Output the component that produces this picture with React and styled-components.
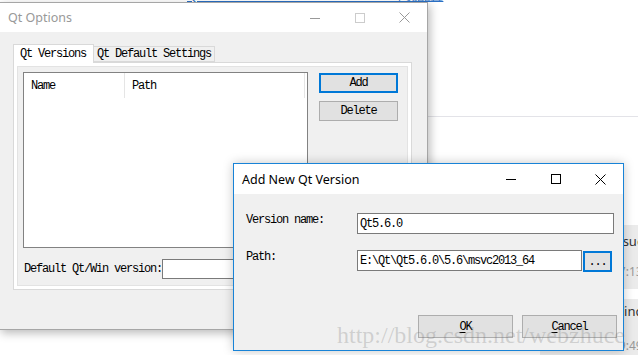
import styled, { createGlobalStyle } from 'styled-components';

const mono = `"Liberation Mono", "DejaVu Sans Mono", monospace`;
const ui = `"Noto Sans", "Open Sans", sans-serif`;

const GlobalStyle = createGlobalStyle`
    html, body {
        margin: 0;
        padding: 0;
        background: #ffffff;
    }
    body {
        font-family: ${mono};
    }
    * {
        box-sizing: border-box;
    }
`;

function MinIcon({ color }) {
    return (
        <svg width="10" height="10" viewBox="0 0 10 10">
            <line x1="0" y1="5.5" x2="10" y2="5.5" stroke={color} strokeWidth="1" />
        </svg>
    );
}

function MaxIcon({ color }) {
    return (
        <svg width="10" height="10" viewBox="0 0 10 10">
            <rect x="0.5" y="0.5" width="9" height="9" fill="none" stroke={color} strokeWidth="1" />
        </svg>
    );
}

function CloseIcon({ color }) {
    return (
        <svg width="11" height="11" viewBox="0 0 11 11">
            <path d="M0.5 0.5 L10.5 10.5 M10.5 0.5 L0.5 10.5" stroke={color} strokeWidth="1" fill="none" />
        </svg>
    );
}

function WindowControls({ active }) {
    const main = active ? '#000000' : '#999999';
    const dim = active ? '#000000' : '#cccccc';
    return (
        <Controls>
            <ControlButton>
                <MinIcon color={main} />
            </ControlButton>
            <ControlButton>
                <MaxIcon color={dim} />
            </ControlButton>
            <ControlButton>
                <CloseIcon color={main} />
            </ControlButton>
        </Controls>
    );
}

function App() {
    return (
        <>
            <GlobalStyle />
            <Desktop>
                <BackPage>
                    <PageLink>Qt 5.6.0 Visual Studio 2013 64-bit 环境配置</PageLink>
                    <Aside>
                        <Divider />
                        <CardList>
                            <Card $height={64} $top={8}>
                                <CardTitle>Issue</CardTitle>
                                <CardTime $gap={15}>07:13</CardTime>
                            </Card>
                            <Card $height={60} $top={4}>
                                <CardTitle>Windows</CardTitle>
                                <CardTime $gap={19}>09:49</CardTime>
                            </Card>
                        </CardList>
                    </Aside>
                </BackPage>

                <OptionsWindow>
                    <TitleBar>
                        <Title $active={false}>Qt Options</Title>
                        <WindowControls active={false} />
                    </TitleBar>
                    <OptionsBody>
                        <TabBar>
                            <Tab $active>Qt Versions</Tab>
                            <Tab>Qt Default Settings</Tab>
                        </TabBar>
                        <TabPane>
                            <TabInner>
                                <TopRow>
                                    <ListView>
                                        <ListHeader>
                                            <HeaderCell $width={101}>Name</HeaderCell>
                                            <HeaderCell $width={180}>Path</HeaderCell>
                                        </ListHeader>
                                    </ListView>
                                    <ButtonColumn>
                                        <SideButton $focused>Add</SideButton>
                                        <SideButton>Delete</SideButton>
                                    </ButtonColumn>
                                </TopRow>
                                <DefaultRow>
                                    <span>Default Qt/Win version:</span>
                                    <SelectBox />
                                </DefaultRow>
                            </TabInner>
                        </TabPane>
                    </OptionsBody>
                </OptionsWindow>

                <Dialog>
                    <TitleBar $dialog>
                        <Title $active>Add New Qt Version</Title>
                        <WindowControls active />
                    </TitleBar>
                    <DialogBody>
                        <Form>
                            <Label>Version name:</Label>
                            <TextField>Qt5.6.0</TextField>
                            <Label>Path:</Label>
                            <PathRow>
                                <TextField>E:\Qt\Qt5.6.0\5.6\msvc2013_64</TextField>
                                <BrowseButton>...</BrowseButton>
                            </PathRow>
                        </Form>
                        <DialogButtons>
                            <DialogButton>
                                <u>O</u>K
                            </DialogButton>
                            <DialogButton>
                                <u>C</u>ancel
                            </DialogButton>
                        </DialogButtons>
                    </DialogBody>
                </Dialog>

                <Watermark>http://blog.csdn.net/webzhuce</Watermark>
            </Desktop>
        </>
    );
}

const Desktop = styled.div`
    position: relative;
    width: 638px;
    height: 355px;
    overflow: hidden;
    background: #ffffff;
`;

const BackPage = styled.div`
    display: flex;
    flex-direction: column;
    height: 100%;
`;

const PageLink = styled.div`
    margin-top: -12px;
    margin-left: 187px;
    height: 14px;
    font-family: ${ui};
    font-size: 13px;
    line-height: 14px;
    color: #2a6fc4;
    text-decoration: underline;
    white-space: nowrap;
`;

const Aside = styled.div`
    display: flex;
    flex-direction: column;
    margin-left: 427px;
`;

const Divider = styled.div`
    margin-top: 114px;
    height: 1px;
    background: #e3e3e8;
`;

const CardList = styled.div`
    display: flex;
    flex-direction: column;
    gap: 10px;
    margin-top: 108px;
    margin-left: 113px;
`;

const Card = styled.div`
    height: ${(p) => p.$height}px;
    padding: ${(p) => p.$top}px 0 0 72px;
    background: #ebebeb;
    font-family: ${ui};
    white-space: nowrap;
`;

const CardTitle = styled.div`
    font-size: 13px;
    line-height: 16px;
    color: #333333;
`;

const CardTime = styled.div`
    margin-top: ${(p) => p.$gap}px;
    font-size: 12px;
    line-height: 16px;
    color: #999999;
`;

const OptionsWindow = styled.div`
    position: absolute;
    left: -1px;
    top: 2px;
    width: 429px;
    height: 328px;
    display: flex;
    flex-direction: column;
    border: 1px solid #a6a6a6;
    background: #f0f0f0;
    box-shadow: 2px 3px 9px rgba(0, 0, 0, 0.28);
`;

const TitleBar = styled.div`
    display: flex;
    align-items: center;
    height: ${(p) => (p.$dialog ? 30 : 29)}px;
    flex-shrink: 0;
    background: #ffffff;
`;

const Title = styled.div`
    padding-left: 8px;
    font-family: ${ui};
    font-size: 12.5px;
    color: ${(p) => (p.$active ? '#000000' : '#999999')};
    white-space: nowrap;
`;

const Controls = styled.div`
    display: flex;
    margin-left: auto;
    height: 100%;
`;

const ControlButton = styled.div`
    display: flex;
    align-items: center;
    justify-content: center;
    width: 45px;
    height: 100%;

    svg {
        display: block;
    }
`;

const OptionsBody = styled.div`
    flex: 1;
    display: flex;
    flex-direction: column;
    padding: 12px 15px 40px 13px;
    font-family: ${mono};
    font-size: 12px;
    letter-spacing: -1.2px;
    color: #000000;
`;

const TabBar = styled.div`
    display: flex;
    align-items: flex-end;
    height: 18px;
    position: relative;
    z-index: 1;
`;

const Tab = styled.div`
    display: flex;
    align-items: center;
    height: ${(p) => (p.$active ? 19 : 16)}px;
    padding: ${(p) => (p.$active ? '0 7px 1px 6px' : '0 3px')};
    margin-bottom: ${(p) => (p.$active ? -1 : 0)}px;
    border: 1px solid #d9d9d9;
    border-bottom: ${(p) => (p.$active ? 'none' : '1px solid #d9d9d9')};
    border-left: ${(p) => (p.$active ? '1px solid #d9d9d9' : 'none')};
    background: ${(p) => (p.$active ? '#ffffff' : '#f0f0f0')};
    white-space: nowrap;
`;

const TabPane = styled.div`
    flex: 1;
    display: flex;
    padding: 3px;
    border: 1px solid #d9d9d9;
    background: #ffffff;
`;

const TabInner = styled.div`
    flex: 1;
    display: flex;
    flex-direction: column;
    padding: 5px 5px 6px 5px;
    border: 1px solid #e3e3e3;
    background: #f0f0f0;
`;

const TopRow = styled.div`
    display: flex;
    gap: 11px;
`;

const ListView = styled.div`
    width: 285px;
    height: 176px;
    border: 1px solid #828282;
    background: #ffffff;
`;

const ListHeader = styled.div`
    display: flex;
    height: 25px;
`;

const HeaderCell = styled.div`
    display: flex;
    align-items: center;
    width: ${(p) => p.$width}px;
    padding-left: 7px;
    border-right: 1px solid #e5e5e5;
`;

const ButtonColumn = styled.div`
    display: flex;
    flex-direction: column;
    gap: 8px;
    margin-top: 1px;
`;

const SideButton = styled.div`
    display: flex;
    align-items: center;
    justify-content: center;
    width: 79px;
    height: 20px;
    border: ${(p) => (p.$focused ? '2px solid #0078d7' : '1px solid #adadad')};
    background: #e1e1e1;
`;

const DefaultRow = styled.div`
    display: flex;
    align-items: center;
    gap: 0;
    margin-top: 11px;
    padding-left: 1px;
`;

const SelectBox = styled.div`
    width: 144px;
    height: 20px;
    border: 1px solid #7a7a7a;
    background: #ffffff;
`;

const Dialog = styled.div`
    position: absolute;
    left: 233px;
    top: 163px;
    width: 391px;
    height: 188px;
    display: flex;
    flex-direction: column;
    border: 1px solid #1883d7;
    background: #f0f0f0;
    box-shadow: 0 0 10px rgba(0, 0, 0, 0.22);
`;

const DialogBody = styled.div`
    flex: 1;
    display: flex;
    flex-direction: column;
    padding: 19px 6px 12px 12px;
    font-family: ${mono};
    font-size: 12px;
    letter-spacing: -1.2px;
    color: #000000;
`;

const Form = styled.div`
    display: grid;
    grid-template-columns: 111px 1fr;
    row-gap: 16px;
    margin-right: 3px;
`;

const Label = styled.div`
    align-self: start;
    line-height: 13px;
    padding-top: 1px;
`;

const TextField = styled.div`
    flex: 1;
    display: flex;
    align-items: center;
    height: 21px;
    padding-left: 2px;
    border: 1px solid #7a7a7a;
    background: #ffffff;
    white-space: nowrap;
`;

const PathRow = styled.div`
    display: flex;
    align-items: flex-start;
    gap: 1px;
    padding-right: 2px;
`;

const BrowseButton = styled.div`
    display: flex;
    align-items: center;
    justify-content: center;
    width: 29px;
    height: 21px;
    border: 2px solid #0078d7;
    background: #e1e1e1;
    margin-top: 1px;
`;

const DialogButtons = styled.div`
    display: flex;
    justify-content: flex-end;
    gap: 9px;
    margin-top: auto;
`;

const DialogButton = styled.div`
    display: flex;
    align-items: center;
    justify-content: center;
    width: 95px;
    height: 23px;
    border: 1px solid #adadad;
    background: #e1e1e1;

    u {
        text-underline-offset: 2px;
    }
`;

const Watermark = styled.div`
    position: absolute;
    left: 337px;
    top: 321px;
    font-family: "Liberation Serif", serif;
    font-size: 24px;
    line-height: 28px;
    color: rgba(110, 110, 110, 0.26);
    white-space: nowrap;
    pointer-events: none;
`;

export default App;
